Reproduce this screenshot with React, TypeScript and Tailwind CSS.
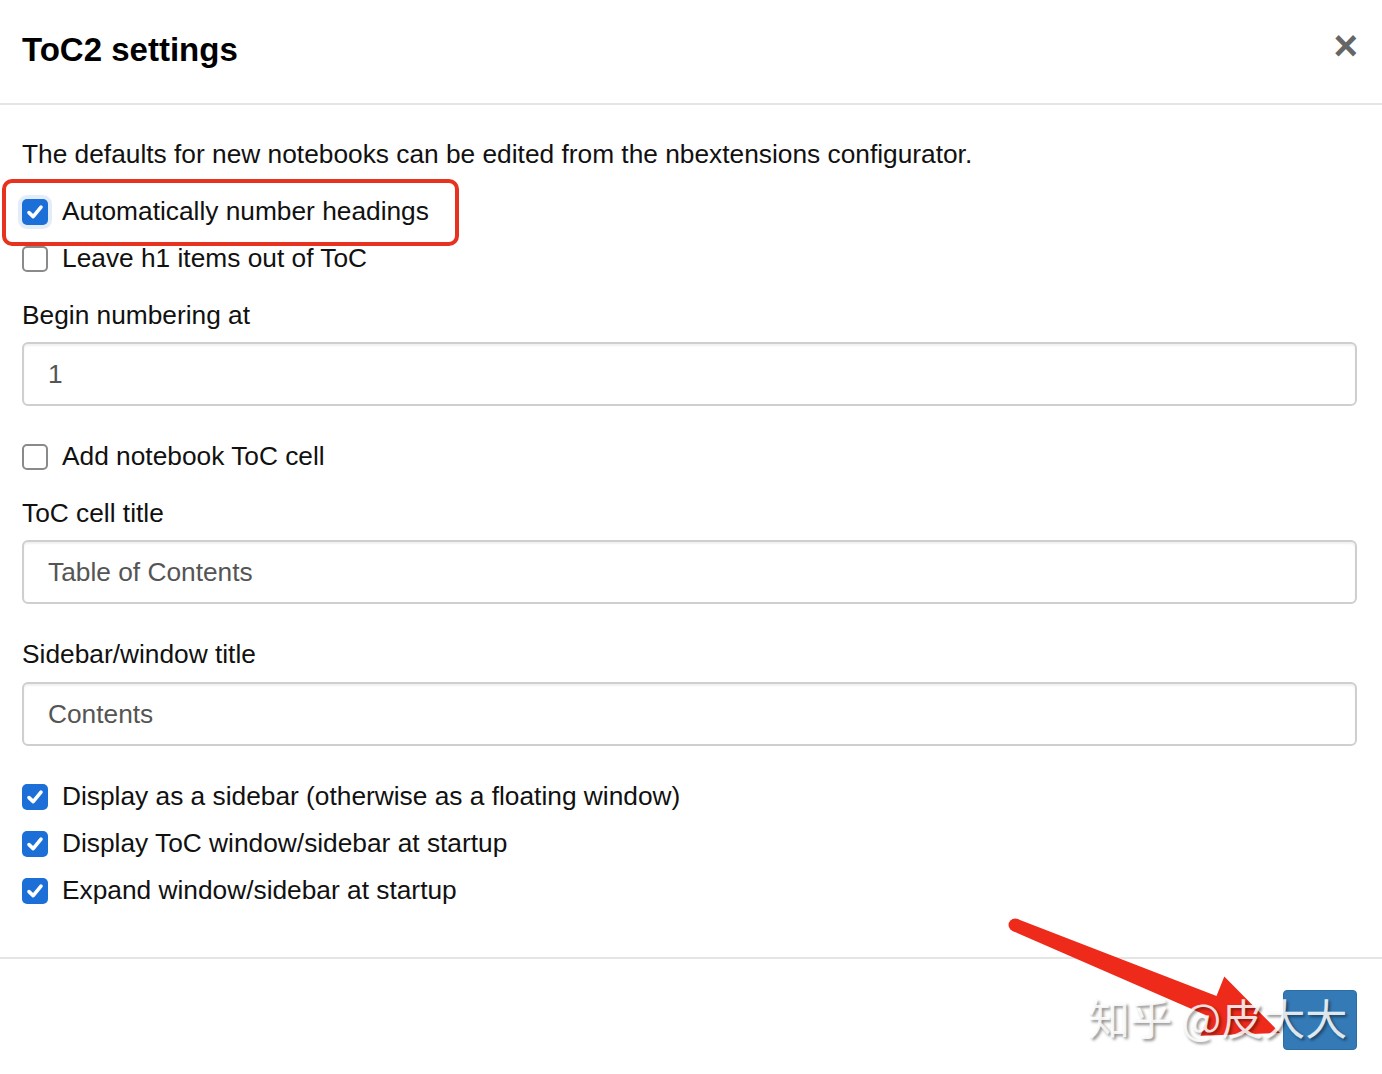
import React from "react";

function Box({ checked, focus }: { checked?: boolean; focus?: boolean }) {
    if (checked) {
        return (
            <span
                className={
                    "flex h-[26px] w-[26px] shrink-0 items-center justify-center rounded-[5px] bg-[#1b6fd6] " +
                    (focus ? "shadow-[0_0_0_4px_rgba(27,111,214,0.12)]" : "")
                }
            >
                <svg width="20" height="20" viewBox="0 0 20 20" fill="none">
                    <path d="M4 10.6 L8.2 14.6 L16 5.2" stroke="white" strokeWidth="3.6" strokeLinecap="round" strokeLinejoin="round" />
                </svg>
            </span>
        );
    }
    return <span className="h-[26px] w-[26px] shrink-0 rounded-[5px] border-2 border-[#8a8a8a] bg-white" />;
}

function CheckRow({ label, checked, focus, className }: { label: string; checked?: boolean; focus?: boolean; className?: string }) {
    return (
        <div className={"flex h-[37px] items-center gap-[14px] " + (className ?? "")}>
            <Box checked={checked} focus={focus} />
            <span>{label}</span>
        </div>
    );
}

function TextField({ value, className }: { value: string; className?: string }) {
    return (
        <div
            className={
                "flex h-[64px] items-center rounded-[6px] border-2 border-[#cfcfcf] pl-[24px] text-[#555] shadow-[inset_0_2px_2px_rgba(0,0,0,0.06)] " +
                (className ?? "")
            }
        >
            {value}
        </div>
    );
}

export default function App() {
    return (
        <div className="relative min-h-screen w-full overflow-hidden bg-white font-['Liberation_Sans',Arial,sans-serif] text-[26.3px] leading-[37px] text-[#111]">
            {/* header */}
            <div className="flex h-[105px] items-center justify-between border-b-2 border-[#e5e5e5] pl-[22px] pr-[24px]">
                <h4 className="mb-[4px] text-[33px] font-bold text-black">ToC2 settings</h4>
                <button className="mb-[12px] text-[42px] font-bold leading-none text-[#666]">×</button>
            </div>

            {/* body */}
            <div className="flex flex-col pb-[48px] pl-[22px] pr-[25px] pt-[31px]">
                <p>The defaults for new notebooks can be edited from the nbextensions configurator.</p>

                <div className="relative mt-[20px]">
                    <CheckRow label="Automatically number headings" checked focus />
                    <div className="pointer-events-none absolute left-[-20px] top-[-14px] h-[67px] w-[457px] rounded-[10px] border-[4px] border-[#e6321f]" />
                </div>
                <CheckRow label="Leave h1 items out of ToC" className="mt-[10px]" />

                <label className="mt-[20px]">Begin numbering at</label>
                <TextField value="1" className="mt-[8px]" />

                <CheckRow label="Add notebook ToC cell" className="mt-[32px]" />

                <label className="mt-[20px]">ToC cell title</label>
                <TextField value="Table of Contents" className="mt-[8px]" />

                <label className="mt-[32px]">Sidebar/window title</label>
                <TextField value="Contents" className="mt-[9px]" />

                <CheckRow label="Display as a sidebar (otherwise as a floating window)" checked className="mt-[32px]" />
                <CheckRow label="Display ToC window/sidebar at startup" checked className="mt-[10px]" />
                <CheckRow label="Expand window/sidebar at startup" checked className="mt-[10px]" />
            </div>

            {/* footer */}
            <div className="flex justify-end border-t-2 border-[#e5e5e5] pb-[24px] pr-[25px] pt-[31px]">
                <button className="h-[60px] w-[74px] rounded-[4px] border border-[#2e6da4] bg-[#337ab7]" aria-label="OK" />
            </div>

            {/* annotation arrow */}
            <svg className="pointer-events-none absolute left-0 top-0" width="1382" height="1074" viewBox="0 0 1382 1074">
                <circle cx="1015" cy="925" r="6.5" fill="#ee2a1b" />
                <polygon
                    points="1012.6,931 1208.3,1016.3 1200.5,1035.8 1280,1033 1224.3,976.4 1216.5,995.9 1017.4,919"
                    fill="#ee2a1b"
                />
            </svg>

            {/* watermark */}
            <div className="pointer-events-none absolute left-[1088px] top-[991px] whitespace-nowrap font-['Noto_Sans_CJK_SC',sans-serif] text-[42px] leading-[52px] text-white/85 [text-shadow:2px_2px_3px_rgba(0,0,0,0.45)]">
                知乎 @皮大大
            </div>
        </div>
    );
}
